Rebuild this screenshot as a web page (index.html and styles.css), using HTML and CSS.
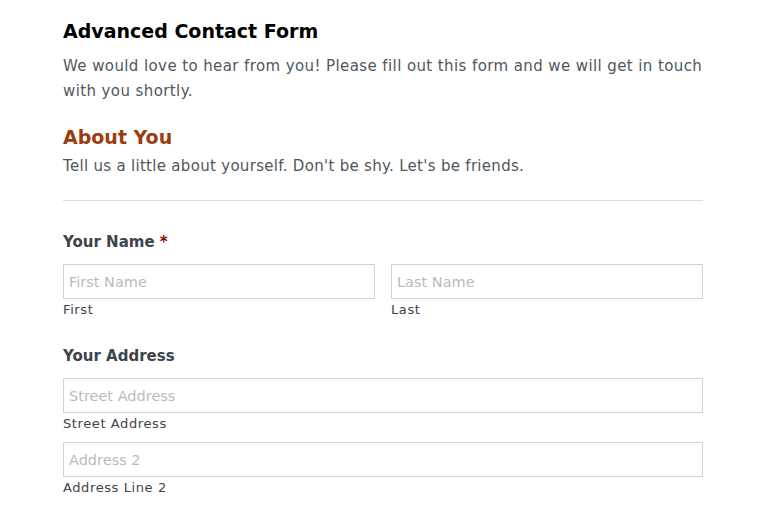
FILE: index.html
```html
<!DOCTYPE html>
<html lang="en">
<head>
    <meta charset="UTF-8">
    <meta name="viewport" content="width=device-width, initial-scale=1.0">
    <title>Advanced Contact Form</title>
    <link rel="stylesheet" href="styles.css">
</head>
<body>
    <div class="form-wrap">
        <h2 class="form-title">Advanced Contact Form</h2>
        <p class="form-desc">We would love to hear from you! Please fill out this form and we will get in touch with you shortly.</p>

        <div class="section">
            <h3>About You</h3>
            <p>Tell us a little about yourself. Don't be shy. Let's be friends.</p>
        </div>

        <div class="field">
            <div class="field-label">Your Name <span class="req">*</span></div>
            <div class="row">
                <div class="col">
                    <input type="text" placeholder="First Name">
                    <label class="sub">First</label>
                </div>
                <div class="col">
                    <input type="text" placeholder="Last Name">
                    <label class="sub">Last</label>
                </div>
            </div>
        </div>

        <div class="field">
            <div class="field-label">Your Address</div>
            <div class="col">
                <input type="text" placeholder="Street Address">
                <label class="sub">Street Address</label>
            </div>
            <div class="col spaced">
                <input type="text" placeholder="Address 2">
                <label class="sub">Address Line 2</label>
            </div>
        </div>
    </div>
</body>
</html>
```

FILE: styles.css
```css
body {
    margin: 0;
    background-color: #fff;
    font-family: "DejaVu Sans", sans-serif;
    color: #50575e;
}
.form-wrap {
    width: 640px;
    margin: 0 0 0 63px;
    padding-top: 18px;
}
.form-title {
    font-size: 19px;
    font-weight: bold;
    color: #000;
    margin: 0 0 10px 0;
    line-height: 26px;
}
.form-desc {
    font-size: 15px;
    letter-spacing: 0.4px;
    line-height: 25px;
    margin: 0;
}
.section {
    margin: 20px 0 5px 0;
    padding-bottom: 21px;
    border-bottom: 1px solid #dcdcde;
}
.section h3 {
    font-size: 19px;
    color: #9c3d10;
    margin: 0 0 4px 0;
    line-height: 26px;
}
.section p {
    font-size: 15px;
    letter-spacing: 0.3px;
    line-height: 25px;
    margin: 0;
}
.field {
    padding-top: 24px;
}
.field-label {
    font-size: 15px;
    font-weight: bold;
    color: #3c434a;
    line-height: 24px;
    margin-bottom: 10px;
}
.req {
    color: #8b0000;
}
.row {
    display: flex;
    gap: 16px;
}
.row .col {
    flex: 1;
}
.col {
    display: flex;
    flex-direction: column;
}
.spaced {
    margin-top: 8px;
}
input {
    box-sizing: border-box;
    height: 35px;
    width: 100%;
    border: 1px solid #d4d4d4;
    padding: 0 5px;
    font-family: inherit;
    font-size: 14.5px;
    color: #333;
    margin: 0;
}
input::placeholder {
    color: #bbb;
}
.sub {
    font-size: 13px;
    line-height: 20px;
    padding-top: 1px;
    letter-spacing: 0.6px;
    color: #3c434a;
}
```
